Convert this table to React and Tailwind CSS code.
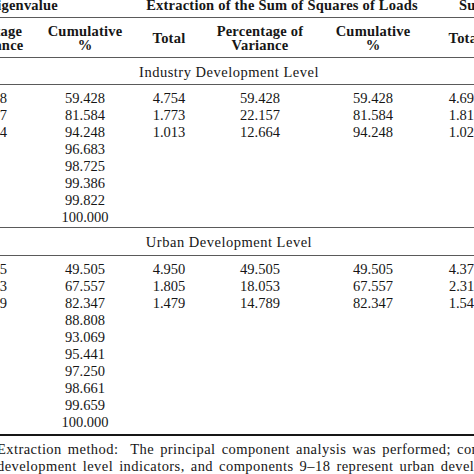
const cols = ["w-[100px]", "w-[98px]", "w-[70px]", "w-[112px]", "w-[114px]", "w-[70px]"];
const align = ["text-left pl-[31px]", "text-center", "text-center", "text-center", "text-center", "text-center"];

const industry = [
  ["59.428", "59.428", "4.754", "59.428", "59.428", "4.694"],
  ["22.157", "81.584", "1.773", "22.157", "81.584", "1.816"],
  ["12.664", "94.248", "1.013", "12.664", "94.248", "1.029"],
  ["2.435", "96.683"],
  ["2.042", "98.725"],
  ["0.661", "99.386"],
  ["0.436", "99.822"],
  ["0.178", "100.000"],
];

const urban = [
  ["49.505", "49.505", "4.950", "49.505", "49.505", "4.377"],
  ["18.053", "67.557", "1.805", "18.053", "67.557", "2.311"],
  ["14.789", "82.347", "1.479", "14.789", "82.347", "1.546"],
  ["6.461", "88.808"],
  ["4.261", "93.069"],
  ["2.372", "95.441"],
  ["1.809", "97.250"],
  ["1.411", "98.661"],
  ["0.998", "99.659"],
  ["0.341", "100.000"],
];

function Rule() {
  return <div className="h-px bg-[#5a5a5a]" />;
}

function DataRows({ rows }) {
  return rows.map((r, i) => (
    <div key={i} className="flex h-[17px]">
      {cols.map((c, j) => (
        <div key={j} className={`${c} ${align[j]} shrink-0 whitespace-nowrap`}>
          {r[j] || ""}
        </div>
      ))}
    </div>
  ));
}

export default function App() {
  return (
    <div className="w-[474px] h-[474px] overflow-hidden bg-white text-[#161616] font-['Liberation_Serif',serif] text-[14.5px]">
      <div className="ml-[-64px] mt-[-3px] w-[586px]">
        {/* group headers */}
        <div className="flex leading-[17px] pb-[3px] font-bold tracking-[0.015em]">
          <div className="w-[198px] shrink-0 text-right pr-[76px] whitespace-nowrap">Initial Eigenvalue</div>
          <div className="w-[296px] shrink-0 text-center whitespace-nowrap">Extraction of the Sum of Squares of Loads</div>
          <div className="shrink-0 pl-[29px] whitespace-nowrap">Sum of Squares of Rotating Loads</div>
        </div>
        <Rule />
        {/* column headers */}
        <div className="flex pt-[7px] pb-[5px] font-bold leading-[13.5px] tracking-[0.015em]">
          <div className={`${cols[0]} shrink-0 text-center pl-[2px]`}>Percentage<br />of Variance</div>
          <div className={`${cols[1]} shrink-0 text-center`}>Cumulative<br />%</div>
          <div className={`${cols[2]} shrink-0 flex items-center justify-center`}>Total</div>
          <div className={`${cols[3]} shrink-0 text-center`}>Percentage of<br />Variance</div>
          <div className={`${cols[4]} shrink-0 text-center`}>Cumulative<br />%</div>
          <div className={`${cols[5]} shrink-0 flex items-center justify-center`}>Total</div>
        </div>
        <Rule />
        <div className="text-center leading-[17px] pt-[6px] pb-[3px] tracking-[0.035em]">Industry Development Level</div>
        <Rule />
        <div className="pt-[5px] pb-[1px] leading-[17px]">
          <DataRows rows={industry} />
        </div>
        <Rule />
        <div className="text-center leading-[17px] pt-[6px] pb-[4px] tracking-[0.035em]">Urban Development Level</div>
        <Rule />
        <div className="pt-[5px] pb-[3px] leading-[17px]">
          <DataRows rows={urban} />
        </div>
        <div className="h-[2px] bg-[#161616]" />
      </div>
      <div className="ml-[-3px] pt-[5px] leading-[17px] tracking-[0.03em] [word-spacing:2px] whitespace-nowrap">
        <div>Extraction method:&nbsp; The principal component analysis was performed; components 1–8 represent industry</div>
        <div>development level indicators, and components 9–18 represent urban development level indicators.</div>
      </div>
    </div>
  );
}
